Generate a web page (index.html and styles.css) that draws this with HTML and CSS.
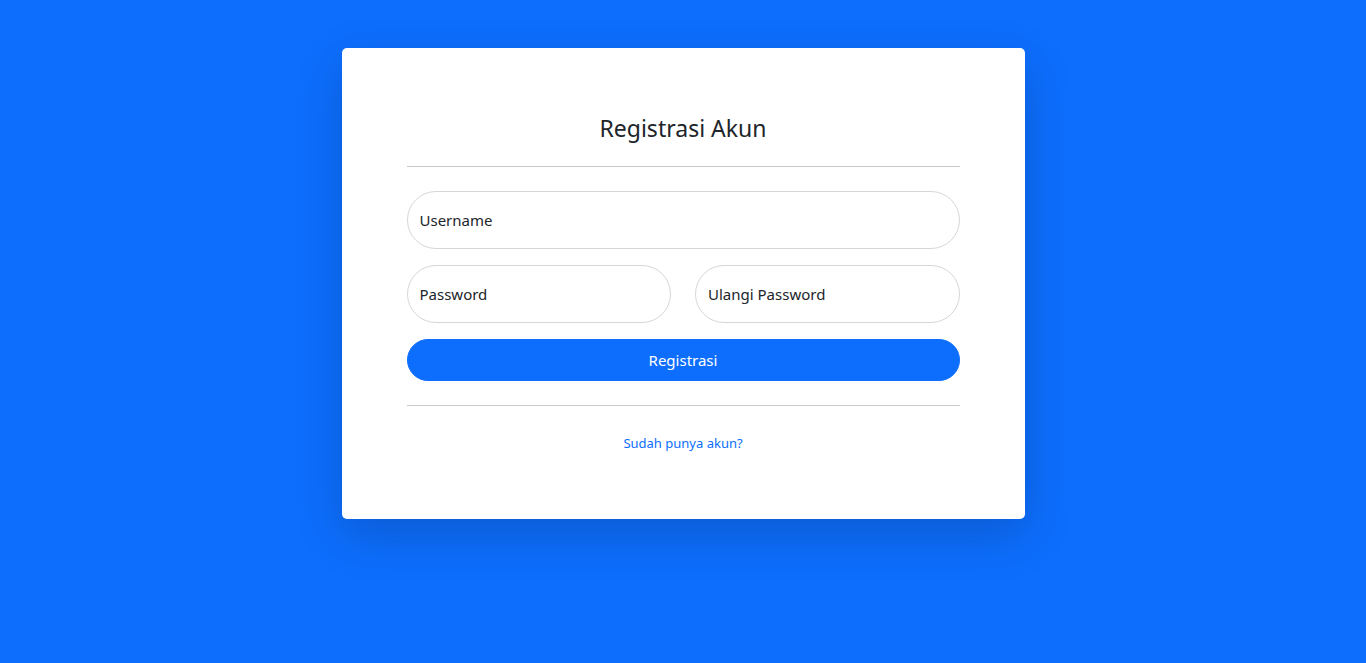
FILE: index.html
```html
<!DOCTYPE html>
<html lang="id">
<head>
    <meta charset="UTF-8">
    <meta name="viewport" content="width=device-width, initial-scale=1.0">
    <title>Registrasi Akun</title>
    <link rel="stylesheet" href="styles.css">
</head>
<body>

    <div class="wrapper">
        <div class="card">
            <h4 class="title">Registrasi Akun</h4>
            <hr>

            <form class="form">
                <input type="text" class="field" placeholder="Username">
                <div class="row">
                    <input type="password" class="field" placeholder="Password">
                    <input type="password" class="field" placeholder="Ulangi Password">
                </div>
                <button type="button" class="btn-register">Registrasi</button>
            </form>

            <hr>
            <div class="footer">
                <a href="#" class="link">Sudah punya akun?</a>
            </div>
        </div>
    </div>

</body>
</html>
```

FILE: styles.css
```css
html, body {
    min-height: 100%;
}
body {
    margin: 0;
    min-height: 100vh;
    background: #0d6efd;
    font-family: "Noto Sans", "Open Sans", sans-serif;
    color: #212529;
}
.wrapper {
    display: flex;
    justify-content: center;
    padding: 48px 0 100px;
}
.card {
    width: 553px;
    padding: 66px 65px 66px 65px;
    background: #fff;
    border-radius: 5px;
    box-shadow: 0 16px 48px rgba(0, 0, 0, 0.175);
}
.title {
    margin: 0 0 23px;
    font-size: 23px;
    font-weight: 400;
    line-height: 29px;
    text-align: center;
}
hr {
    margin: 0;
    border: none;
    border-top: 1px solid #c8c9ca;
}
.form {
    display: flex;
    flex-direction: column;
    gap: 16px;
    margin: 24px 0;
}
.row {
    display: grid;
    grid-template-columns: 1fr 1fr;
    gap: 24px;
}
.field {
    box-sizing: border-box;
    width: 100%;
    height: 58px;
    padding: 0 12px;
    border: 1px solid #d5d7da;
    border-radius: 30px;
    font-family: inherit;
    font-size: 15px;
    color: #212529;
    outline: none;
}
.field::placeholder {
    color: #212529;
    opacity: 1;
}
.btn-register {
    height: 42px;
    border: 1px solid #0d6efd;
    border-radius: 21px;
    background: #0d6efd;
    color: #fff;
    font-family: inherit;
    font-size: 15px;
    cursor: pointer;
}
.footer {
    padding-top: 26px;
    text-align: center;
    line-height: 20px;
}
.link {
    color: #0d6efd;
    font-size: 13px;
    text-decoration: none;
}
```
